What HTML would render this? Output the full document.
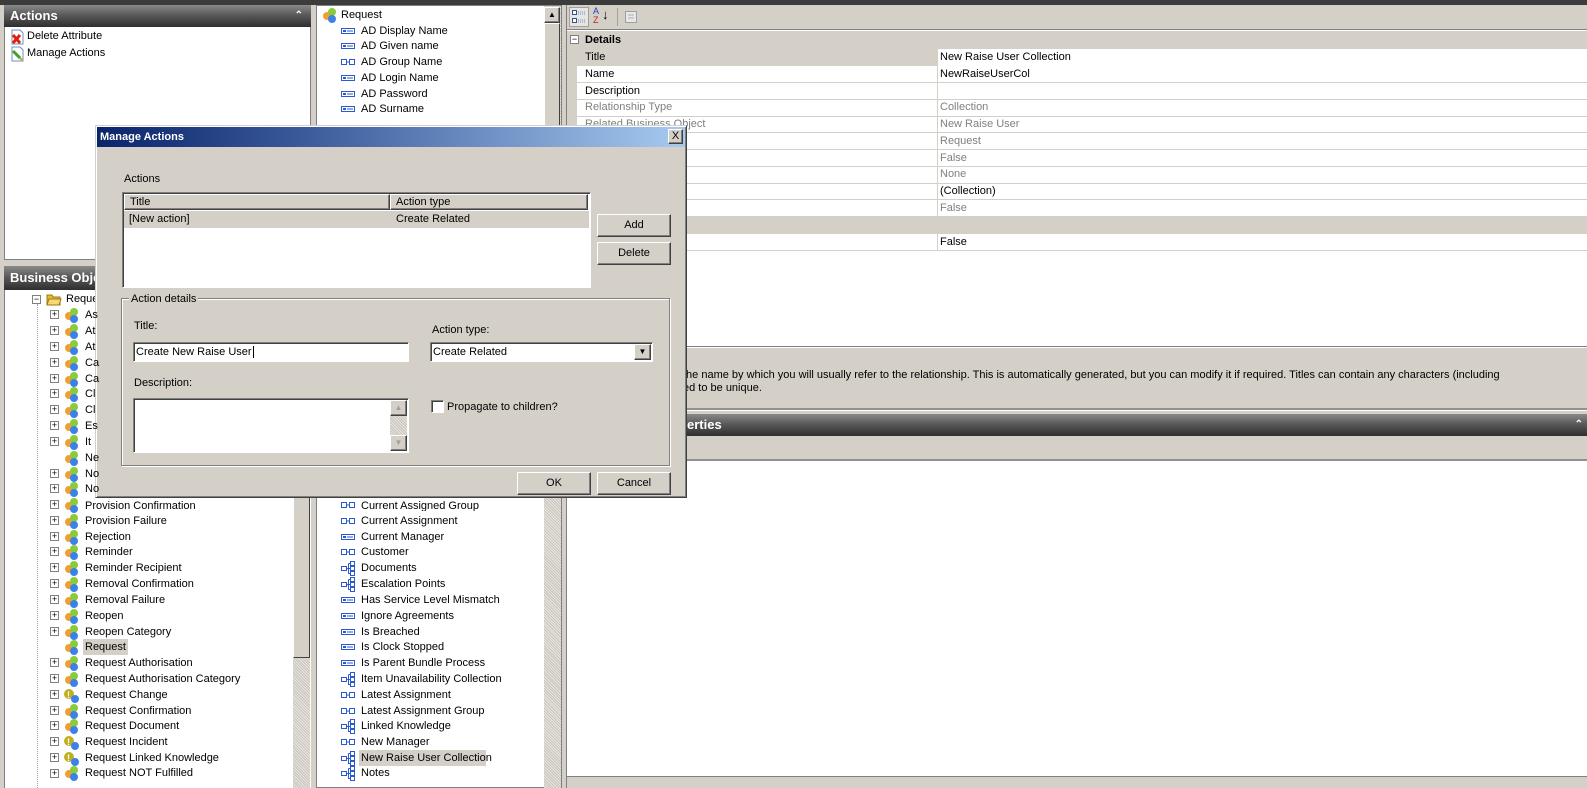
<!DOCTYPE html>
<html><head><meta charset="utf-8"><style>
*{box-sizing:border-box;margin:0;padding:0}
body{width:1587px;height:788px;overflow:hidden;background:#d4d0c8;font-family:"Liberation Sans",Tahoma,sans-serif;font-size:11px;color:#000;position:relative}
.a{position:absolute}
.t{position:absolute;white-space:nowrap;line-height:14px;font-size:11px}
.hdr{position:absolute;background:linear-gradient(#8a8a8a,#5a5a5a 45%,#2e2e2e);color:#fff;font-weight:bold;font-size:13px;line-height:22px;padding-left:6px}
.w{position:absolute;background:#fff}
.ic{position:absolute;width:16px;height:16px}
.pl{position:absolute;width:9px;height:9px;border:1px solid #808080;background:#fff;font-size:9px;line-height:7px;text-align:center;color:#000}
.btn{position:absolute;background:#d4d0c8;border:1px solid;border-color:#fff #404040 #404040 #fff;box-shadow:inset -1px -1px 0 #808080;text-align:center;line-height:20px;font-size:11px}
.sunk{position:absolute;background:#fff;border:1px solid;border-color:#808080 #fff #fff #808080;box-shadow:inset 1px 1px 0 #404040}
.prow{position:absolute;left:577px;width:1010px;height:17px;border-bottom:1px solid #d4d0c8}
.hatch{background-color:#e8e6e0;background-image:repeating-linear-gradient(45deg,#c8c4bc 0 1px,transparent 1px 2px)}
</style></head><body>
<svg width="0" height="0" style="position:absolute">
<defs>
<g id="bo"><circle cx="5" cy="9" r="4" fill="#f0a030"/><circle cx="10" cy="5" r="4" fill="#8acb3c"/><circle cx="10" cy="12" r="4" fill="#3c82e6"/></g>
<g id="bx"><circle cx="5" cy="7" r="5" fill="#c0b020"/><text x="3" y="11" font-size="9" font-weight="bold" fill="#fff" font-family="Liberation Sans">!</text><circle cx="11" cy="12" r="4" fill="#3c82e6"/></g>
<g id="fd"><rect x="1.5" y="5.5" width="13" height="5" fill="#fff" stroke="#2a5ad0"/><rect x="3" y="7" width="3" height="2" fill="#2a5ad0"/><rect x="7" y="7.5" width="6" height="1" fill="#2a5ad0"/></g>
<g id="rl"><rect x="1.5" y="5.5" width="5" height="5" fill="#fff" stroke="#2a5ad0"/><rect x="9.5" y="5.5" width="5" height="5" fill="#fff" stroke="#2a5ad0"/><rect x="6" y="7.5" width="4" height="1" fill="#2a5ad0"/></g>
<g id="cl"><rect x="1.5" y="6.5" width="5" height="4" fill="#fff" stroke="#2a5ad0"/><rect x="10.5" y="1.5" width="4" height="4" fill="#fff" stroke="#2a5ad0"/><rect x="10.5" y="6.5" width="4" height="4" fill="#fff" stroke="#2a5ad0"/><rect x="10.5" y="11.5" width="4" height="4" fill="#fff" stroke="#2a5ad0"/><path d="M6.5 8.5H10.5M8.5 3.5V13.5H10.5M8.5 3.5H10.5" stroke="#2a5ad0" fill="none"/></g>
</defs></svg>

<div class="a" style="left:0;top:0;width:1587px;height:5px;background:#3c3c3c"></div>

<div class="hdr" style="left:4px;top:5px;width:307px;height:22px">Actions<span style="position:absolute;right:8px;top:0;font-size:10px">⌃</span></div>
<div class="w" style="left:4px;top:27px;width:307px;height:233px;border:1px solid #808080;border-top:0"></div>
<svg class="ic" style="left:9px;top:29px" viewBox="0 0 16 16"><path d="M3 1h8l3 3v11H3z" fill="#fff" stroke="#7090c0"/><path d="M4 6l7 8M11 6l-7 8" stroke="#e02010" stroke-width="3"/></svg>
<div class="t" style="left:27px;top:29px">Delete Attribute</div>
<svg class="ic" style="left:9px;top:46px" viewBox="0 0 16 16"><path d="M3 1h8l3 3v11H3z" fill="#fff" stroke="#7090c0"/><path d="M4 5l7 7" stroke="#40a030" stroke-width="3"/><path d="M11 12l2 2" stroke="#e0a020" stroke-width="2"/></svg>
<div class="t" style="left:27px;top:46px">Manage Actions</div>

<div class="hdr" style="left:4px;top:266px;width:307px;height:24px;line-height:24px">Business Objects</div>
<div class="w" style="left:4px;top:290px;width:307px;height:498px;border-left:1px solid #808080"></div>
<div class="a hatch" style="left:293px;top:290px;width:17px;height:498px"></div>
<div class="a" style="left:293px;top:290px;width:17px;height:368px;background:#d4d0c8;border:1px solid;border-color:#fff #404040 #404040 #fff"></div>
<div class="a" style="left:37px;top:304px;height:484px;border-left:1px dotted #a0a0a0"></div>
<div class="pl" style="left:32px;top:295px">−</div>
<svg class="ic" style="left:46px;top:291px" viewBox="0 0 16 16"><path d="M1 4h5l1 2h7v8H1z" fill="#e8b830" stroke="#a07810"/><path d="M3 8h12l-2 6H1z" fill="#f8d870" stroke="#a07810"/></svg>
<div class="t" style="left:66px;top:292px">Request</div>

<div class="w" style="left:316px;top:5px;width:246px;height:783px;border:1px solid #808080"></div>
<div class="a hatch" style="left:544px;top:6px;width:17px;height:782px"></div>
<div class="btn" style="left:544px;top:7px;width:16px;height:16px;line-height:14px;font-size:8px">▲</div>
<div class="a" style="left:544px;top:23px;width:16px;height:470px;background:#d4d0c8;border:1px solid;border-color:#fff #404040 #404040 #fff"></div>
<svg class="ic" style="left:322px;top:7px" viewBox="0 0 16 16"><use href="#bo"/></svg>
<div class="t" style="left:341px;top:8px">Request</div>

<div class="a" style="left:566px;top:5px;width:1021px;height:783px;background:#d4d0c8;border-left:1px solid #808080"></div>
<div class="a" style="left:569px;top:7px;width:20px;height:20px;border:1px solid #a0a0a0;background:#e8e6e0"></div>
<svg class="ic" style="left:571px;top:9px" viewBox="0 0 16 16"><rect x="1.5" y="1.5" width="4" height="4" fill="#fff" stroke="#305090"/><rect x="1.5" y="9.5" width="4" height="4" fill="#fff" stroke="#305090"/><path d="M7 3h7M7 5h7M7 11h7M7 13h7" stroke="#7090c0" stroke-dasharray="1 1"/></svg>
<div class="t" style="left:593px;top:7px;font-size:9px;line-height:9px;color:#2040c0">A<br><span style="color:#c02020">Z</span></div>
<div class="t" style="left:602px;top:8px;font-size:13px">↓</div>
<div class="a" style="left:617px;top:8px;width:1px;height:18px;background:#a0a0a0"></div>
<svg class="ic" style="left:623px;top:9px" viewBox="0 0 16 16"><rect x="2.5" y="2.5" width="11" height="11" fill="#e8e8e8" stroke="#a0a0a0"/><path d="M5 6h6M5 9h6" stroke="#b0b0b0"/></svg>
<div class="a" style="left:567px;top:29px;width:1020px;height:2px;border-top:1px solid #808080;border-bottom:1px solid #fff"></div>
<div class="a" style="left:567px;top:31px;width:1020px;height:315px;background:#fff"></div>
<div class="a" style="left:567px;top:31px;width:10px;height:315px;background:#d4d0c8"></div>
<div class="a" style="left:567px;top:31px;width:1020px;height:18px;background:#d4d0c8"></div>
<div class="pl" style="left:570px;top:35px">−</div>
<div class="t" style="left:585px;top:33px;font-weight:bold">Details</div>

<div class="prow" style="top:49px;background:#d4d0c8"></div>
<div class="a" style="left:937px;top:49px;width:650px;height:17px;background:#fff"></div>
<div class="t" style="left:585px;top:50px">Title</div><div class="t" style="left:940px;top:50px">New Raise User Collection</div>
<div class="prow" style="top:66px"></div><div class="t" style="left:585px;top:67px">Name</div><div class="t" style="left:940px;top:67px">NewRaiseUserCol</div>
<div class="prow" style="top:83px"></div><div class="t" style="left:585px;top:84px">Description</div>
<div class="prow" style="top:100px"></div><div class="t" style="left:585px;top:100px;color:#808080">Relationship Type</div><div class="t" style="left:940px;top:100px;color:#808080">Collection</div>
<div class="prow" style="top:116px"></div><div class="t" style="left:585px;top:117px;color:#808080">Related Business Object</div><div class="t" style="left:940px;top:117px;color:#808080">New Raise User</div>
<div class="prow" style="top:133px"></div><div class="t" style="left:940px;top:134px;color:#808080">Request</div>
<div class="prow" style="top:150px"></div><div class="t" style="left:940px;top:151px;color:#808080">False</div>
<div class="prow" style="top:167px"></div><div class="t" style="left:940px;top:167px;color:#808080">None</div>
<div class="prow" style="top:183px"></div><div class="t" style="left:940px;top:184px">(Collection)</div>
<div class="prow" style="top:200px"></div><div class="t" style="left:940px;top:201px;color:#808080">False</div>
<div class="a" style="left:567px;top:216px;width:1020px;height:18px;background:#d4d0c8"></div>
<div class="prow" style="top:234px"></div><div class="t" style="left:940px;top:235px">False</div>
<div class="a" style="left:937px;top:49px;width:1px;height:201px;background:#d4d0c8"></div>

<div class="a" style="left:567px;top:346px;width:1020px;height:2px;border-top:1px solid #808080;border-bottom:1px solid #fff"></div>
<div class="t" style="left:683px;top:368px">the name by which you will usually refer to the relationship. This is automatically generated, but you can modify it if required. Titles can contain any characters (including</div>
<div class="t" style="left:683px;top:381px">ed to be unique.</div>
<div class="a" style="left:567px;top:408px;width:1020px;height:3px;background:#909090;border-bottom:1px solid #fff"></div>
<div class="hdr" style="left:567px;top:414px;width:1020px;height:22px"><span style="position:absolute;left:120px">erties</span><span style="position:absolute;right:4px;top:0;font-size:10px">⌃</span></div>
<div class="a" style="left:567px;top:459px;width:1020px;height:320px;background:#fff;border-top:2px solid #909090"></div>
<div class="a" style="left:567px;top:776px;width:1020px;height:12px;background:#d4d0c8;border-top:1px solid #808080"></div>

<!-- DIALOG -->
<div class="a" style="left:95px;top:125px;width:592px;height:373px;background:#d4d0c8;border:1px solid;border-color:#d4d0c8 #404040 #404040 #d4d0c8;box-shadow:inset 1px 1px 0 #fff,inset -1px -1px 0 #808080"></div>
<div class="a" style="left:97px;top:127px;width:588px;height:20px;background:linear-gradient(90deg,#0a246a,#3a5a9a 35%,#a6caf0)"></div>
<div class="t" style="left:100px;top:130px;color:#fff;font-weight:bold">Manage Actions</div>
<div class="btn" style="left:668px;top:129px;width:15px;height:15px;line-height:13px;font-size:11px">X</div>

<div class="t" style="left:124px;top:172px">Actions</div>
<div class="sunk" style="left:122px;top:192px;width:469px;height:96px"></div>
<div class="btn" style="left:124px;top:194px;width:266px;height:16px;line-height:14px;text-align:left;padding-left:5px">Title</div>
<div class="btn" style="left:390px;top:194px;width:198px;height:16px;line-height:14px;text-align:left;padding-left:5px">Action type</div>
<div class="a" style="left:124px;top:211px;width:465px;height:17px;background:#d4d0c8"></div>
<div class="t" style="left:129px;top:212px">[New action]</div>
<div class="t" style="left:396px;top:212px">Create Related</div>
<div class="btn" style="left:597px;top:214px;width:74px;height:23px">Add</div>
<div class="btn" style="left:597px;top:242px;width:74px;height:23px">Delete</div>

<div class="a" style="left:121px;top:298px;width:549px;height:168px;border:1px solid #808080;box-shadow:1px 1px 0 #fff,inset 1px 1px 0 #fff"></div>
<div class="t" style="left:129px;top:292px;background:#d4d0c8;padding:0 2px">Action details</div>
<div class="t" style="left:134px;top:319px">Title:</div>
<div class="sunk" style="left:133px;top:342px;width:276px;height:20px"></div>
<div class="t" style="left:136px;top:345px">Create New Raise User<span style="border-left:1px solid #000;margin-left:1px"></span></div>
<div class="t" style="left:432px;top:323px">Action type:</div>
<div class="sunk" style="left:430px;top:342px;width:223px;height:20px"></div>
<div class="t" style="left:433px;top:345px">Create Related</div>
<div class="btn" style="left:634px;top:344px;width:17px;height:16px;line-height:14px;font-size:8px">▼</div>
<div class="t" style="left:134px;top:376px">Description:</div>
<div class="sunk" style="left:133px;top:398px;width:276px;height:55px"></div>
<div class="a hatch" style="left:390px;top:400px;width:17px;height:51px"></div>
<div class="btn" style="left:390px;top:400px;width:17px;height:16px;line-height:14px;font-size:8px;color:#a0a0a0">▲</div>
<div class="btn" style="left:390px;top:435px;width:17px;height:16px;line-height:14px;font-size:8px;color:#a0a0a0">▼</div>
<div class="sunk" style="left:431px;top:400px;width:13px;height:13px"></div>
<div class="t" style="left:447px;top:400px">Propagate to children?</div>
<div class="btn" style="left:517px;top:472px;width:74px;height:23px">OK</div>
<div class="btn" style="left:597px;top:472px;width:74px;height:23px">Cancel</div>

<svg class="ic" style="left:340px;top:497px" viewBox="0 0 16 16"><use href="#rl"/></svg><div class="t" style="left:361px;top:499px;height:12px;overflow:hidden">Current Assigned Group</div>
<svg class="ic" style="left:340px;top:513px" viewBox="0 0 16 16"><use href="#rl"/></svg><div class="t" style="left:361px;top:514px">Current Assignment</div>
<svg class="ic" style="left:340px;top:529px" viewBox="0 0 16 16"><use href="#fd"/></svg><div class="t" style="left:361px;top:530px">Current Manager</div>
<svg class="ic" style="left:340px;top:544px" viewBox="0 0 16 16"><use href="#rl"/></svg><div class="t" style="left:361px;top:545px">Customer</div>
<svg class="ic" style="left:340px;top:560px" viewBox="0 0 16 16"><use href="#cl"/></svg><div class="t" style="left:361px;top:561px">Documents</div>
<svg class="ic" style="left:340px;top:576px" viewBox="0 0 16 16"><use href="#cl"/></svg><div class="t" style="left:361px;top:577px">Escalation Points</div>
<svg class="ic" style="left:340px;top:592px" viewBox="0 0 16 16"><use href="#fd"/></svg><div class="t" style="left:361px;top:593px">Has Service Level Mismatch</div>
<svg class="ic" style="left:340px;top:608px" viewBox="0 0 16 16"><use href="#fd"/></svg><div class="t" style="left:361px;top:609px">Ignore Agreements</div>
<svg class="ic" style="left:340px;top:624px" viewBox="0 0 16 16"><use href="#fd"/></svg><div class="t" style="left:361px;top:625px">Is Breached</div>
<svg class="ic" style="left:340px;top:639px" viewBox="0 0 16 16"><use href="#fd"/></svg><div class="t" style="left:361px;top:640px">Is Clock Stopped</div>
<svg class="ic" style="left:340px;top:655px" viewBox="0 0 16 16"><use href="#fd"/></svg><div class="t" style="left:361px;top:656px">Is Parent Bundle Process</div>
<svg class="ic" style="left:340px;top:671px" viewBox="0 0 16 16"><use href="#cl"/></svg><div class="t" style="left:361px;top:672px">Item Unavailability Collection</div>
<svg class="ic" style="left:340px;top:687px" viewBox="0 0 16 16"><use href="#rl"/></svg><div class="t" style="left:361px;top:688px">Latest Assignment</div>
<svg class="ic" style="left:340px;top:703px" viewBox="0 0 16 16"><use href="#rl"/></svg><div class="t" style="left:361px;top:704px">Latest Assignment Group</div>
<svg class="ic" style="left:340px;top:718px" viewBox="0 0 16 16"><use href="#cl"/></svg><div class="t" style="left:361px;top:719px">Linked Knowledge</div>
<svg class="ic" style="left:340px;top:734px" viewBox="0 0 16 16"><use href="#rl"/></svg><div class="t" style="left:361px;top:735px">New Manager</div>
<div class="a" style="left:359px;top:750px;width:127px;height:16px;background:#d4d0c8"></div>
<svg class="ic" style="left:340px;top:750px" viewBox="0 0 16 16"><use href="#cl"/></svg><div class="t" style="left:361px;top:751px">New Raise User Collection</div>
<svg class="ic" style="left:340px;top:765px" viewBox="0 0 16 16"><use href="#cl"/></svg><div class="t" style="left:361px;top:766px">Notes</div>

<svg class="ic" style="left:340px;top:23px" viewBox="0 0 16 16"><use href="#fd"/></svg><div class="t" style="left:361px;top:24px">AD Display Name</div>
<svg class="ic" style="left:340px;top:38px" viewBox="0 0 16 16"><use href="#fd"/></svg><div class="t" style="left:361px;top:39px">AD Given name</div>
<svg class="ic" style="left:340px;top:54px" viewBox="0 0 16 16"><use href="#rl"/></svg><div class="t" style="left:361px;top:55px">AD Group Name</div>
<svg class="ic" style="left:340px;top:70px" viewBox="0 0 16 16"><use href="#fd"/></svg><div class="t" style="left:361px;top:71px">AD Login Name</div>
<svg class="ic" style="left:340px;top:86px" viewBox="0 0 16 16"><use href="#fd"/></svg><div class="t" style="left:361px;top:87px">AD Password</div>
<svg class="ic" style="left:340px;top:101px" viewBox="0 0 16 16"><use href="#fd"/></svg><div class="t" style="left:361px;top:102px">AD Surname</div>

<div style="position:absolute;left:0;top:0">
<div class="pl" style="left:50px;top:310px">+</div><svg class="ic" style="left:64px;top:307px" viewBox="0 0 16 16"><use href="#bo"/></svg><div class="t" style="left:85px;top:308px">As</div>
<div class="pl" style="left:50px;top:326px">+</div><svg class="ic" style="left:64px;top:323px" viewBox="0 0 16 16"><use href="#bo"/></svg><div class="t" style="left:85px;top:324px">At</div>
<div class="pl" style="left:50px;top:342px">+</div><svg class="ic" style="left:64px;top:339px" viewBox="0 0 16 16"><use href="#bo"/></svg><div class="t" style="left:85px;top:340px">At</div>
<div class="pl" style="left:50px;top:358px">+</div><svg class="ic" style="left:64px;top:355px" viewBox="0 0 16 16"><use href="#bo"/></svg><div class="t" style="left:85px;top:356px">Ca</div>
<div class="pl" style="left:50px;top:374px">+</div><svg class="ic" style="left:64px;top:371px" viewBox="0 0 16 16"><use href="#bo"/></svg><div class="t" style="left:85px;top:372px">Ca</div>
<div class="pl" style="left:50px;top:389px">+</div><svg class="ic" style="left:64px;top:386px" viewBox="0 0 16 16"><use href="#bo"/></svg><div class="t" style="left:85px;top:387px">Cl</div>
<div class="pl" style="left:50px;top:405px">+</div><svg class="ic" style="left:64px;top:402px" viewBox="0 0 16 16"><use href="#bo"/></svg><div class="t" style="left:85px;top:403px">Cl</div>
<div class="pl" style="left:50px;top:421px">+</div><svg class="ic" style="left:64px;top:418px" viewBox="0 0 16 16"><use href="#bo"/></svg><div class="t" style="left:85px;top:419px">Es</div>
<div class="pl" style="left:50px;top:437px">+</div><svg class="ic" style="left:64px;top:434px" viewBox="0 0 16 16"><use href="#bo"/></svg><div class="t" style="left:85px;top:435px">It</div>
<svg class="ic" style="left:64px;top:450px" viewBox="0 0 16 16"><use href="#bo"/></svg><div class="t" style="left:85px;top:451px">Ne</div>
<div class="pl" style="left:50px;top:469px">+</div><svg class="ic" style="left:64px;top:466px" viewBox="0 0 16 16"><use href="#bo"/></svg><div class="t" style="left:85px;top:467px">No</div>
<div class="pl" style="left:50px;top:484px">+</div><svg class="ic" style="left:64px;top:481px" viewBox="0 0 16 16"><use href="#bo"/></svg><div class="t" style="left:85px;top:482px">No</div>
<div class="pl" style="left:50px;top:500px">+</div><svg class="ic" style="left:64px;top:497px" viewBox="0 0 16 16"><use href="#bo"/></svg><div class="t" style="left:85px;top:499px;height:12px;overflow:hidden">Provision Confirmation</div>
<div class="pl" style="left:50px;top:516px">+</div><svg class="ic" style="left:64px;top:513px" viewBox="0 0 16 16"><use href="#bo"/></svg><div class="t" style="left:85px;top:514px">Provision Failure</div>
<div class="pl" style="left:50px;top:532px">+</div><svg class="ic" style="left:64px;top:529px" viewBox="0 0 16 16"><use href="#bo"/></svg><div class="t" style="left:85px;top:530px">Rejection</div>
<div class="pl" style="left:50px;top:547px">+</div><svg class="ic" style="left:64px;top:544px" viewBox="0 0 16 16"><use href="#bo"/></svg><div class="t" style="left:85px;top:545px">Reminder</div>
<div class="pl" style="left:50px;top:563px">+</div><svg class="ic" style="left:64px;top:560px" viewBox="0 0 16 16"><use href="#bo"/></svg><div class="t" style="left:85px;top:561px">Reminder Recipient</div>
<div class="pl" style="left:50px;top:579px">+</div><svg class="ic" style="left:64px;top:576px" viewBox="0 0 16 16"><use href="#bo"/></svg><div class="t" style="left:85px;top:577px">Removal Confirmation</div>
<div class="pl" style="left:50px;top:595px">+</div><svg class="ic" style="left:64px;top:592px" viewBox="0 0 16 16"><use href="#bo"/></svg><div class="t" style="left:85px;top:593px">Removal Failure</div>
<div class="pl" style="left:50px;top:611px">+</div><svg class="ic" style="left:64px;top:608px" viewBox="0 0 16 16"><use href="#bo"/></svg><div class="t" style="left:85px;top:609px">Reopen</div>
<div class="pl" style="left:50px;top:627px">+</div><svg class="ic" style="left:64px;top:624px" viewBox="0 0 16 16"><use href="#bo"/></svg><div class="t" style="left:85px;top:625px">Reopen Category</div>
<div class="a" style="left:83px;top:639px;width:45px;height:16px;background:#d4d0c8"></div>
<svg class="ic" style="left:64px;top:639px" viewBox="0 0 16 16"><use href="#bo"/></svg><div class="t" style="left:85px;top:640px">Request</div>
<div class="pl" style="left:50px;top:658px">+</div><svg class="ic" style="left:64px;top:655px" viewBox="0 0 16 16"><use href="#bo"/></svg><div class="t" style="left:85px;top:656px">Request Authorisation</div>
<div class="pl" style="left:50px;top:674px">+</div><svg class="ic" style="left:64px;top:671px" viewBox="0 0 16 16"><use href="#bo"/></svg><div class="t" style="left:85px;top:672px">Request Authorisation Category</div>
<div class="pl" style="left:50px;top:690px">+</div><svg class="ic" style="left:64px;top:687px" viewBox="0 0 16 16"><use href="#bx"/></svg><div class="t" style="left:85px;top:688px">Request Change</div>
<div class="pl" style="left:50px;top:706px">+</div><svg class="ic" style="left:64px;top:703px" viewBox="0 0 16 16"><use href="#bo"/></svg><div class="t" style="left:85px;top:704px">Request Confirmation</div>
<div class="pl" style="left:50px;top:721px">+</div><svg class="ic" style="left:64px;top:718px" viewBox="0 0 16 16"><use href="#bo"/></svg><div class="t" style="left:85px;top:719px">Request Document</div>
<div class="pl" style="left:50px;top:737px">+</div><svg class="ic" style="left:64px;top:734px" viewBox="0 0 16 16"><use href="#bx"/></svg><div class="t" style="left:85px;top:735px">Request Incident</div>
<div class="pl" style="left:50px;top:753px">+</div><svg class="ic" style="left:64px;top:750px" viewBox="0 0 16 16"><use href="#bx"/></svg><div class="t" style="left:85px;top:751px">Request Linked Knowledge</div>
<div class="pl" style="left:50px;top:769px">+</div><svg class="ic" style="left:64px;top:765px" viewBox="0 0 16 16"><use href="#bo"/></svg><div class="t" style="left:85px;top:766px">Request NOT Fulfilled</div>
</div>
</body></html>
